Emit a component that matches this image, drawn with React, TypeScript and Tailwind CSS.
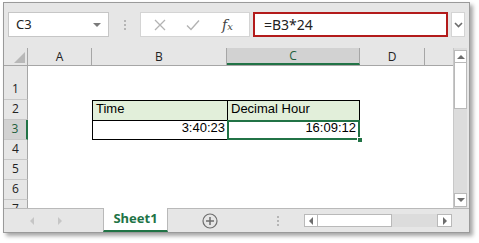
import React from "react";

const cols = [
  { name: "A", w: "w-[64px]" },
  { name: "B", w: "w-[135px]" },
  { name: "C", w: "w-[133px]" },
  { name: "D", w: "w-[65px]" },
  { name: "", w: "w-[28px]" },
];

const rows = [
  { n: 1, h: "h-[34px]" },
  { n: 2, h: "h-[20px]" },
  { n: 3, h: "h-[20px]" },
  { n: 4, h: "h-[20px]" },
  { n: 5, h: "h-[20px]" },
  { n: 6, h: "h-[20px]" },
  { n: 7, h: "h-[20px]" },
];

const Tri = ({ dir, color = "#6d6d6d", size = 4 }: { dir: "up" | "down" | "left" | "right"; color?: string; size?: number }) => {
  const s = size;
  const pts =
    dir === "up"
      ? `0,${s} ${s},0 ${s * 2},${s}`
      : dir === "down"
      ? `0,0 ${s * 2},0 ${s},${s}`
      : dir === "left"
      ? `${s},0 ${s},${s * 2} 0,${s}`
      : `0,0 0,${s * 2} ${s},${s}`;
  const w = dir === "up" || dir === "down" ? s * 2 : s;
  const h = dir === "up" || dir === "down" ? s : s * 2;
  return (
    <svg width={w} height={h} viewBox={`0 0 ${w} ${h}`}>
      <polygon points={pts} fill={color} />
    </svg>
  );
};

const cellText = "font-['Liberation_Sans',Arial,sans-serif] text-[13px] text-black";

function Cell({ col, row }: { col: number; row: number }) {
  const base = `${cols[col].w} h-full relative flex items-end pb-[2px]`;
  if (row === 2 && col === 1)
    return <div className={`${base} bg-[#e2efda] border-t border-l border-black pl-[3px] ${cellText}`}>Time</div>;
  if (row === 2 && col === 2)
    return <div className={`${base} bg-[#e2efda] border-t border-l border-r border-black pl-[3px] ${cellText}`}>Decimal Hour</div>;
  if (row === 3 && col === 1)
    return <div className={`${base} border-t border-l border-b border-black justify-end pr-[2px] ${cellText}`}>3:40:23</div>;
  if (row === 3 && col === 2)
    return (
      <div className={`${base} border-t border-l border-r border-b border-black justify-end pr-[3px] ${cellText}`}>
        16:09:12
        <div className="absolute -top-px -left-px -right-px -bottom-px border-2 border-[#217346]" />
        <div className="absolute -right-[4px] -bottom-[4px] w-[6px] h-[6px] bg-[#217346] border border-white" />
      </div>
    );
  return <div className={base} />;
}

export default function App() {
  return (
    <div className="w-[479px] h-[243px] bg-white pt-[2px] pl-[3px] font-['Open_Sans',sans-serif]">
      <div className="w-[467px] h-[231px] border border-[#9a9a9a] bg-[#e6e6e6] flex flex-col shadow-[3px_3px_4px_rgba(0,0,0,0.35)] overflow-hidden">
        {/* formula bar */}
        <div className="h-[45px] shrink-0 flex items-start pt-[9px] pl-[4px]">
          <div className="w-[101px] h-[25px] bg-white border border-[#c6c6c6] flex items-center justify-between pl-[7px] pr-[7px]">
            <span className="text-[13px] text-[#222] font-['Noto_Sans',sans-serif]">C3</span>
            <Tri dir="down" size={4} color="#7a7a7a" />
          </div>
          <div className="w-[31px] h-[25px] flex flex-col items-center justify-center gap-[2px]">
            <div className="w-[2px] h-[2px] bg-[#b5b5b5]" />
            <div className="w-[2px] h-[2px] bg-[#b5b5b5]" />
            <div className="w-[2px] h-[2px] bg-[#b5b5b5]" />
          </div>
          <div className="w-[110px] h-[25px] bg-white border border-[#d4d4d4] flex items-center pl-[13px]">
            <svg width="12" height="12" viewBox="0 0 12 12">
              <path d="M1 1 L11 11 M11 1 L1 11" stroke="#b3b3b3" strokeWidth="1.3" />
            </svg>
            <svg width="14" height="12" viewBox="0 0 14 12" className="ml-[20px]">
              <path d="M1 6.5 L5 10.5 L13 1.5" stroke="#b3b3b3" strokeWidth="1.4" fill="none" />
            </svg>
            <span className="ml-[22px] font-['DejaVu_Serif',serif] italic text-[14px] text-[#444] leading-none">
              f<span className="text-[10px]">x</span>
            </span>
          </div>
          <div className="w-[195px] h-[25px] ml-[3px] bg-white border-2 border-[#b31b1b] flex items-center pl-[9px]">
            <span className="text-[14px] text-[#222] font-['Noto_Sans',sans-serif]">=B3*24</span>
          </div>
          <div className="w-[14px] h-[25px] ml-[3px] bg-white border border-[#d4d4d4] flex items-center justify-center">
            <svg width="9" height="6" viewBox="0 0 9 6">
              <path d="M1 1 L4.5 4.5 L8 1" stroke="#6d6d6d" strokeWidth="1.6" fill="none" />
            </svg>
          </div>
        </div>

        {/* grid */}
        <div className="h-[160px] shrink-0 flex overflow-hidden">
          <div className="w-[449px] flex flex-col bg-white">
            <div className="h-[18px] shrink-0 flex bg-[#e6e6e6] border-b border-[#a6a6a6]">
              <div className="w-[24px] h-full border-r border-[#a6a6a6] flex items-end justify-end pr-[2px] pb-[2px]">
                <svg width="11" height="11" viewBox="0 0 11 11">
                  <polygon points="11,0 11,11 0,11" fill="#b8b8b8" />
                </svg>
              </div>
              {cols.map((c, i) => (
                <div
                  key={i}
                  className={`${c.w} h-full flex items-center justify-center text-[12px] ${
                    c.name === "C"
                      ? "bg-[#d2d2d2] text-[#1e5f3c] border-b-2 border-[#217346] border-r border-r-[#a6a6a6]"
                      : c.name
                      ? "text-[#222] border-r border-[#a6a6a6]"
                      : ""
                  }`}
                >
                  {c.name}
                </div>
              ))}
            </div>
            {rows.map((r) => (
              <div key={r.n} className={`${r.h} flex shrink-0`}>
                <div
                  className={`w-[24px] h-full flex items-end justify-center pb-[1px] text-[12px] border-b border-[#c8c8c8] ${
                    r.n === 3
                      ? "bg-[#d2d2d2] text-[#1e5f3c] border-r-2 border-r-[#217346]"
                      : "bg-[#e6e6e6] text-[#222] border-r border-r-[#a6a6a6]"
                  }`}
                >
                  {r.n}
                </div>
                {cols.map((_, ci) => (
                  <Cell key={ci} col={ci} row={r.n} />
                ))}
              </div>
            ))}
          </div>
          {/* vertical scrollbar */}
          <div className="w-[14px] h-full pt-[2px] flex flex-col bg-[#dcdcdc] border-l border-[#c8c8c8]">
            <div className="h-[13px] bg-white border border-[#b9b9b9] flex items-center justify-center">
              <Tri dir="up" size={4} />
            </div>
            <div className="h-[46px] bg-white border border-[#b9b9b9] border-t-0" />
            <div className="flex-1" />
            <div className="h-[14px] mb-[1px] bg-white border border-[#b9b9b9] flex items-center justify-center">
              <Tri dir="down" size={4} />
            </div>
          </div>
        </div>

        {/* sheet tabs */}
        <div className="flex-1 flex items-stretch border-t border-[#b9b9b9]">
          <div className="w-[99px] flex items-center pl-[26px] gap-[24px]">
            <Tri dir="left" size={4} color="#c6c6c6" />
            <Tri dir="right" size={4} color="#c6c6c6" />
          </div>
          <div className="w-[65px] -mt-px bg-white border-x border-[#b9b9b9] border-b-2 border-b-[#217346] flex items-center justify-center">
            <span className="text-[13px] font-bold text-[#217346] font-['Noto_Sans',sans-serif]">Sheet1</span>
          </div>
          <div className="w-[84px] flex items-center pl-[34px]">
            <svg width="16" height="16" viewBox="0 0 16 16">
              <circle cx="8" cy="8" r="7" stroke="#6e6e6e" strokeWidth="1.2" fill="none" />
              <path d="M8 4 V12 M4 8 H12" stroke="#6e6e6e" strokeWidth="1.5" />
            </svg>
          </div>
          <div className="w-[52px] flex flex-col items-center justify-center gap-[2px]">
            <div className="w-[2px] h-[2px] bg-[#b5b5b5]" />
            <div className="w-[2px] h-[2px] bg-[#b5b5b5]" />
            <div className="w-[2px] h-[2px] bg-[#b5b5b5]" />
          </div>
          <div className="flex items-center">
            <div className="w-[148px] h-[13px] flex bg-[#dcdcdc]">
              <div className="w-[14px] h-full bg-white border border-[#b9b9b9] flex items-center justify-center">
                <Tri dir="left" size={4} />
              </div>
              <div className="w-[74px] h-full bg-white border border-[#b9b9b9] border-l-0" />
              <div className="flex-1" />
              <div className="w-[15px] h-full bg-white border border-[#b9b9b9] flex items-center justify-center">
                <Tri dir="right" size={4} />
              </div>
            </div>
          </div>
        </div>
      </div>
    </div>
  );
}
